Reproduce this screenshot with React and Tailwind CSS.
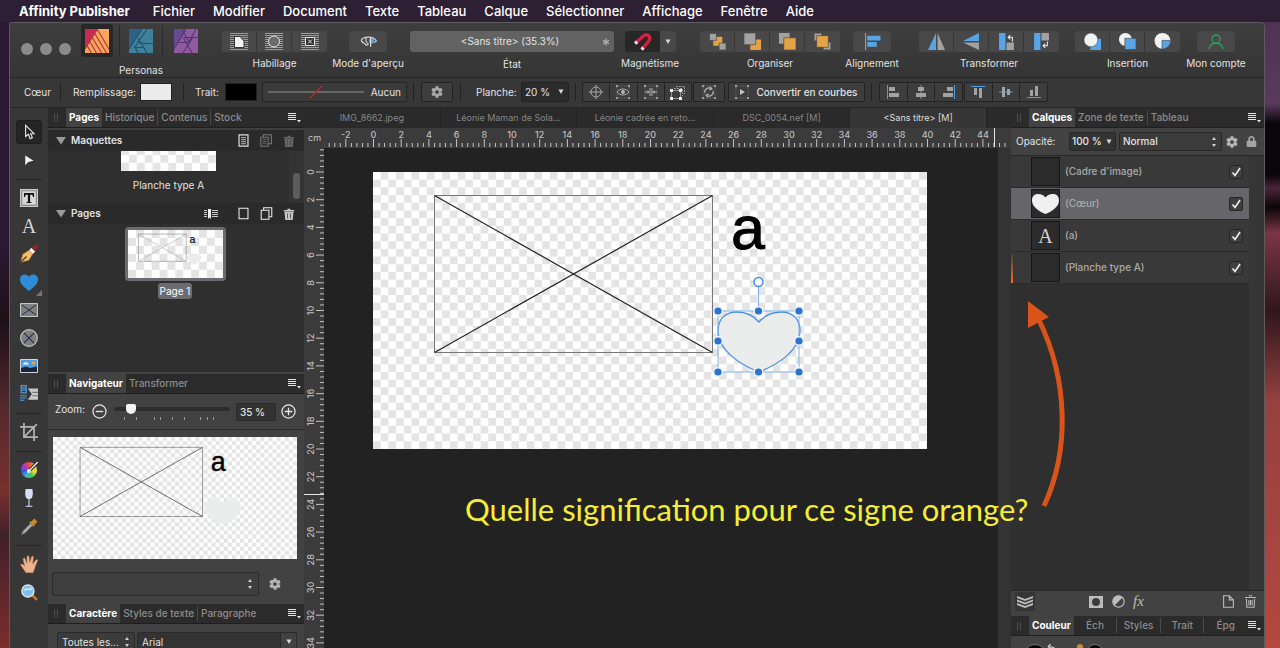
import { useId, useState } from 'react';
import { FaCog, FaLock } from 'react-icons/fa';

const MENUS = ['Fichier', 'Modifier', 'Document', 'Texte', 'Tableau', 'Calque', 'Sélectionner', 'Affichage', 'Fenêtre', 'Aide'];

const DOCUMENTS = ['IMG_8662.jpeg', 'Léonie Maman de Sola...', 'Léonie cadrée en reto...', 'DSC_0054.nef [M]', '<Sans titre> [M]'];

const LAYERS = [
  { id: 'frame', name: "(Cadre d'image)" },
  { id: 'heart', name: '(Cœur)' },
  { id: 'text', name: '(a)' },
  { id: 'master', name: '(Planche type A)', master: true },
];

const HEART = 'M386 150 C380 143 372 140 364 140 C351 140 345 148 345 159 C345 178 366 192 386 200 C406 192 427 178 427 159 C427 148 421 140 408 140 C400 140 392 143 386 150 Z';

// Pixels per centimetre at the current zoom
const CM = 13.85;

// ---------- Page artwork (canvas, navigator and page thumbnails) ----------

const PageArtwork = ({ cell, line = '#222', lineWidth = 1, empty = false, className, children }) => {
  const id = useId();
  return (
    <svg viewBox="0 0 554 277" className={className} preserveAspectRatio="none">
      <defs>
        <pattern id={id} width={cell * 2} height={cell * 2} patternUnits="userSpaceOnUse">
          <rect width={cell * 2} height={cell * 2} fill="#fff" />
          <rect x={cell} width={cell} height={cell} fill="#e4e4e4" />
          <rect y={cell} width={cell} height={cell} fill="#e4e4e4" />
        </pattern>
      </defs>
      <rect width="554" height="277" fill={`url(#${id})`} />
      {!empty && (
        <>
          <path d="M61.5 23.5 H339.5 V180.5 H61.5 Z" fill="none" stroke="#777" strokeWidth={lineWidth} />
          <path d="M61.5 23.5 L339.5 180.5 M61.5 180.5 L339.5 23.5" fill="none" stroke={line} strokeWidth={lineWidth * 1.2} />
          <text x="358" y="77" fontSize="61" fontFamily="Liberation Sans, Arial, sans-serif" fill="#000" stroke="#000">a</text>
          <path d={HEART} fill="#ebecec" />
        </>
      )}
      {children}
    </svg>
  );
};

const Selection = () => (
  <g>
    <path d={HEART} fill="none" stroke="#4a90e2" strokeWidth="1.3" />
    <path d="M345 139 H426 V200 H345 Z M385.5 139 V110" fill="none" stroke="#7fb2ee" strokeWidth="1" />
    <circle cx="385.5" cy="110" r="4.5" fill="#fff" stroke="#4a90e2" strokeWidth="1.6" />
    {[[345, 139], [385.5, 139], [426, 139], [345, 169], [426, 169], [345, 200], [385.5, 200], [426, 200]].map(([x, y]) => (
      <circle key={`${x}-${y}`} cx={x} cy={y} r="4.3" fill="#2a74cf" stroke="#eef3f9" strokeWidth="1.4" />
    ))}
  </g>
);

// ---------- Rulers ----------

const range = (from, to) => Array.from({ length: to - from + 1 }, (_, i) => from + i);

const HorizontalRuler = () => (
  <svg className="h-5 min-w-0 flex-1" aria-hidden="true">
    {range(-9, 114).map((i) => {
      const x = 49.5 + i * 0.4 * CM;
      return <path key={i} d={`M${x} ${i % 5 === 0 ? 11 : 15} V19`} stroke="#c4c4c4" />;
    })}
    {range(-1, 22).map((n) => (
      <text key={n} x={49.5 + n * 2 * CM} y="10" textAnchor="middle" fontSize="9" fontWeight="500" fontFamily="Inter, sans-serif" fill="#bdbdbd">{n * 2}</text>
    ))}
    <path d="M670.5 0 V19" stroke="#e6e6e6" />
  </svg>
);

const VerticalRuler = () => (
  <svg className="h-full w-5 shrink-0 bg-[#3b3b3b]" aria-hidden="true">
    {range(-4, 90).map((i) => {
      const y = 24 + i * 0.4 * CM;
      return <path key={i} d={`M${i % 5 === 0 ? 12 : 16} ${y} H20`} stroke="#c4c4c4" />;
    })}
    {range(0, 17).map((n) => (
      <text key={n} transform={`translate(10 ${24 + n * 2 * CM}) rotate(-90)`} textAnchor="middle" fontSize="9" fontWeight="500" fontFamily="Inter, sans-serif" fill="#bdbdbd">{n * 2}</text>
    ))}
    <path d="M0 346.5 H20" stroke="#e6e6e6" />
  </svg>
);

// ---------- Small shared pieces ----------

const Svg = ({ size = 16, children, className = '' }) => (
  <svg width={size} height={size} viewBox="0 0 16 16" fill="none" className={className} aria-hidden="true">{children}</svg>
);

const UpDown = ({ className = '' }) => (
  <svg viewBox="0 0 6 12" className={`pointer-events-none h-3 w-[6px] ${className}`} fill="#d0d0d0" aria-hidden="true">
    <path d="M3 1 L5 4 H1Z M3 11 L5 8 H1Z" />
  </svg>
);

const Caret = ({ className = '' }) => (
  <svg viewBox="0 0 8 6" className={`pointer-events-none h-[6px] w-2 ${className}`} fill="#d8d8d8" aria-hidden="true">
    <path d="M1.5 0.5 H6.500 L4 5Z" />
  </svg>
);

const PanelMenu = () => (
  <button aria-label="Options du panneau" className="ml-auto mr-[3px]">
    <svg width="14" height="11" viewBox="0 0 14 11" fill="none" stroke="#e4e4e4" aria-hidden="true">
      <path d="M1 1.5 H9 M1 3.5 H9 M1 5.5 H9 M1 7.5 H9" />
      <path d="M10 8 H14 L12 10.5Z" fill="#e4e4e4" stroke="none" />
    </svg>
  </button>
);

const PanelTabs = ({ tabs, spread }) => (
  <div role="tablist" className="flex h-5 shrink-0 items-center border-b border-[#1f1f1f] bg-[#2b2b2b]">
    <div className="ml-[6px] mr-2 h-2 w-[4px] shrink-0 border-x border-[#4e4e4e]" />
    {tabs.map((tab, i) => (
      <button
        key={tab}
        role="tab"
        aria-selected={i === 0}
        className={`whitespace-nowrap ${
          i === 0
            ? 'h-full bg-[#424242] px-[3px] font-bold text-white'
            : `font-medium text-[#8c8c8c] ${spread ? 'flex-1' : 'px-[3px]'} ${i > 1 ? 'border-l border-[#4a4a4a]' : ''}`
        }`}
      >
        {tab}
      </button>
    ))}
    <PanelMenu />
  </div>
);

const ToolGroup = ({ label, className = '', children }) => (
  <div className={`flex shrink-0 flex-col items-center ${className}`}>
    <div className="flex h-[21px] overflow-hidden rounded-[3px] bg-[#484848]">{children}</div>
    <span className="mt-1 whitespace-nowrap leading-[14px]">{label}</span>
  </div>
);

const ToolButton = ({ label, wide, children }) => (
  <button aria-label={label} className={`flex items-center justify-center border-r border-[#383838] last:border-r-0 ${wide ? 'w-[38px]' : 'w-[35px]'}`}>
    {children}
  </button>
);

const BarGroup = ({ className = '', children }) => (
  <div className={`flex h-5 shrink-0 overflow-hidden rounded-[2px] border border-[#232323] bg-[#3d3d3d] ${className}`}>{children}</div>
);

const BarButton = ({ label, children }) => (
  <button aria-label={label} className="flex flex-1 items-center justify-center border-r border-[#232323] last:border-r-0">{children}</button>
);

const BarSeparator = ({ className }) => <div className={`h-[18px] w-px shrink-0 bg-[#222] ${className}`} />;

const Corners = ({ stroke = '#9c9c9c' }) => (
  <g>
    <path d="M3 2 H13 M3 14 H13 M2 3 V13 M14 3 V13" stroke="#6c6c6c" strokeDasharray="1 1" />
    <path d="M1 1h2v2h-2z M13 1h2v2h-2z M1 13h2v2h-2z M13 13h2v2h-2z" fill={stroke} />
  </g>
);

// ---------- Main toolbar ----------

const WrapIcon = ({ children }) => (
  <svg width="18" height="17" viewBox="0 0 18 17" fill="none" aria-hidden="true">
    <path d="M0 .5H18 M0 2.5H18 M0 4.5H18 M0 6.5H18 M0 8.5H18 M0 10.5H18 M0 12.5H18 M0 14.5H18 M0 16.5H18" stroke="#9a9a9a" />
    {children}
  </svg>
);

const Toolbar = () => (
  <header className="flex h-[55px] shrink-0 items-start border-b border-[#262626] bg-gradient-to-b from-[#3e3e3e] to-[#353535]">
    <div className="ml-[11px] mt-5 flex w-[54px] shrink-0 gap-[7px]">
      {['Fermer', 'Réduire', 'Agrandir'].map((name) => (
        <button key={name} aria-label={name} className="size-3 rounded-full bg-[#8b8b8b]" />
      ))}
    </div>
    <div className="ml-[6px] flex w-[120px] shrink-0 flex-col items-center">
      <div className="flex w-full items-center pt-px">
        <button aria-label="Publisher" className="mr-[6px] flex h-[33px] w-8 items-center justify-center rounded-[3px] bg-[#272727]">
          <svg width="24" height="24" viewBox="0 0 24 24" aria-hidden="true">
            <path d="M0 0H24V24H0Z" fill="#fba45c" />
            <path d="M0 0H12L0 20Z" fill="#c92a55" />
            <path d="M12 0 L24 20 M9.5 4 L21.5 24 M7 8 L16.5 24 M4.5 12 L11.5 24 M2 16.500 L6.500 24 M0 20 L12.5 0" stroke="#a3353c" strokeWidth="1.1" />
          </svg>
        </button>
        <button aria-label="Designer" className="flex h-8 w-[43px] items-center justify-center border-l border-[#2a2a2a]">
          <svg width="24" height="24" viewBox="0 0 24 24" fill="none" aria-hidden="true">
            <path d="M0 0H24V24H0Z" fill="#3f809a" />
            <path d="M0 0H13L0 20Z" fill="#2f6188" />
            <path d="M13 0 L0 20 M18 0 L6 18 L9 24 M9.500 13.500 L15 14.500 H24 M9 9 L18 24 M5 18.500 H14" stroke="#24506c" strokeWidth="1.1" />
          </svg>
        </button>
        <button aria-label="Photo" className="flex h-8 flex-1 items-center justify-end border-l border-[#2a2a2a] pr-[3px]">
          <svg width="24" height="24" viewBox="0 0 24 24" fill="none" aria-hidden="true">
            <path d="M0 0H24V24H0Z" fill="#9059a0" />
            <path d="M0 0H12L0 20Z" fill="#684a91" />
            <path d="M12 0 L0 20 M8 0 L15 13 M9.500 8.500 H24 M19 8 L9 24 M15 13.500 H3 M9.500 9 L18 24 M15 13 L22 0" stroke="#573670" strokeWidth="1.1" />
          </svg>
        </button>
      </div>
      <span className="mt-[6px] leading-[14px]">Personas</span>
    </div>

    <ToolGroup label="Habillage" className="ml-[21px] mt-2 w-[105px]">
      <ToolButton label="Habillage serré">
        <WrapIcon><path d="M4.5 3.5H10L14 8V14.5H4.5Z" fill="#f2f2f2" stroke="#333" /></WrapIcon>
      </ToolButton>
      <ToolButton label="Habillage circulaire">
        <WrapIcon><circle cx="9" cy="8.5" r="5.5" fill="#6a6a6a" stroke="#e4e4e4" /></WrapIcon>
      </ToolButton>
      <ToolButton label="Sans habillage">
        <WrapIcon><path d="M4.5 4.5H13.5V12.5H4.5Z" fill="#333" stroke="#e4e4e4" /><path d="M7 6.500 L11 10.500 M11 6.500 L7 10.500" stroke="#e4e4e4" /></WrapIcon>
      </ToolButton>
    </ToolGroup>

    <ToolGroup label="Mode d'aperçu" className="ml-[6px] mt-2 w-[70px]">
      <ToolButton label="Aperçu" wide>
        <Svg size={17}>
          <path d="M1 7 C3 3.500 12 2 15.5 7.500 L13.500 9 M1 7 L6 11.500 L8.500 10 M1 7 L3 9.500" stroke="#d4d4d4" />
          <path d="M6 4.500 C5 7 6 9 7.500 10" stroke="#d4d4d4" />
          <circle cx="11" cy="7.5" r="2.6" fill="#4e9fdc" />
          <path d="M10 4.500V13" stroke="#eee" />
        </Svg>
      </ToolButton>
    </ToolGroup>

    <div className="ml-[7px] mt-2 flex w-[204px] shrink-0 flex-col items-center">
      <div className="flex h-[21px] w-full items-center rounded-[3px] bg-[#626262] px-1">
        <span className="flex-1 pl-1 text-center">&lt;Sans titre&gt; (35.3%)</span>
        <Svg size={8}><path d="M8 1V15 M2 4.500L14 11.500 M14 4.500L2 11.500" stroke="#b4b4b4" strokeWidth="2.400" /></Svg>
      </div>
      <span className="mt-[5px] leading-[14px]">État</span>
    </div>

    <ToolGroup label="Magnétisme" className="ml-[7px] mt-2 w-[58px]">
      <button aria-label="Magnétisme" className="flex w-[35px] items-center justify-center bg-[#272727]">
        <Svg size={19}>
          <path d="M2.5 9 L8.500 3.500 C12 .5 16 4 13 8 L8 14" stroke="#d4213f" strokeWidth="2.8" />
          <path d="M1.8 9.700 L3.500 8.200 M7.300 14.800 L8.700 13.200" stroke="#eee" strokeWidth="2.8" />
        </Svg>
      </button>
      <button aria-label="Options de magnétisme" className="flex w-4 items-center justify-center"><Caret /></button>
    </ToolGroup>

    <ToolGroup label="Organiser" className="ml-[21px] mt-2 w-[140px]">
      <ToolButton label="Arrière-plan"><Svg size={17}><path d="M4 3.500H12.500V12H4Z" fill="#e5a345" /><path d="M.5 .5H7V7H.5Z M9.500 9.500H16V16H9.500Z" fill="#a2a2a2" stroke="#444" strokeWidth=".6" /></Svg></ToolButton>
      <ToolButton label="Reculer"><Svg size={17}><path d="M6 6H16V16H6Z" fill="#e5a345" /><path d="M0 0H11V11H0Z" fill="#a2a2a2" stroke="#444" strokeWidth=".6" /></Svg></ToolButton>
      <ToolButton label="Avancer"><Svg size={17}><path d="M0 0H10V10H0Z" fill="#a2a2a2" /><path d="M4.500 4.500H16V16H4.500Z" fill="#e5a345" stroke="#444" strokeWidth=".6" /></Svg></ToolButton>
      <ToolButton label="Premier plan"><Svg size={17}><path d="M.5 .5H7V7H.5Z M9 9H15.500V15.500H9Z" fill="#a2a2a2" /><path d="M2.500 2.500H13.500V13.500H2.500Z" fill="#e5a345" stroke="#444" strokeWidth=".6" /></Svg></ToolButton>
    </ToolGroup>

    <ToolGroup label="Alignement" className="ml-[6px] mt-2 w-[52px]">
      <ToolButton label="Alignement" wide><Svg size={17}><path d="M1.500 0V16" stroke="#a2a2a2" /><path d="M3 2.500H15.500V7H3Z M3 8.500H12V13H3Z" fill="#57a5e6" /></Svg></ToolButton>
    </ToolGroup>

    <ToolGroup label="Transformer" className="ml-[21px] mt-2 w-[140px]">
      <ToolButton label="Symétrie horizontale"><Svg size={17}><path d="M7.500 0V16H0Z" fill="#57a5e6" /><path d="M9 0V16H16Z" fill="#a2a2a2" /></Svg></ToolButton>
      <ToolButton label="Symétrie verticale"><Svg size={17}><path d="M15 0V7.500H0Z" fill="#57a5e6" /><path d="M0 9H15V16Z" fill="#a2a2a2" /></Svg></ToolButton>
      <ToolButton label="Rotation à gauche"><Svg size={17}><path d="M1 0H7V16H1Z" fill="#57a5e6" /><path d="M8 9H15V16H8Z" fill="#a2a2a2" /><path d="M13.500 8V4H10 M11.500 2L9.500 4L11.500 6" stroke="#eee" /></Svg></ToolButton>
      <ToolButton label="Rotation à droite"><Svg size={17}><path d="M1 0H7V16H1Z" fill="#57a5e6" /><path d="M8 0H15V7H8Z" fill="#a2a2a2" /><path d="M13.500 8V12H10 M11.500 10L9.500 12L11.500 14" stroke="#eee" /></Svg></ToolButton>
    </ToolGroup>

    <ToolGroup label="Insertion" className="ml-4 mt-2 w-[105px]">
      <ToolButton label="Insérer derrière"><Svg size={17}><path d="M6 5.500H16V16H6Z" fill="#57a5e6" /><circle cx="6.500" cy="6.500" r="6.500" fill="#f2f2f2" stroke="#444" strokeWidth=".5" /></Svg></ToolButton>
      <ToolButton label="Insérer devant"><Svg size={17}><circle cx="6" cy="6" r="6" fill="#f2f2f2" /><path d="M5.500 5H16V15.500H5.500Z" fill="#57a5e6" stroke="#444" strokeWidth=".6" /></Svg></ToolButton>
      <ToolButton label="Insérer dedans"><Svg size={17}><circle cx="8" cy="7.500" r="7.500" fill="#f2f2f2" /><path d="M7.500 7H15.500A7.500 7.500 0 0 1 7.500 15Z" fill="#57a5e6" stroke="#444" strokeWidth=".6" /></Svg></ToolButton>
    </ToolGroup>

    <ToolGroup label="Mon compte" className="ml-[6px] mt-2 w-[60px]">
      <ToolButton label="Mon compte" wide><Svg size={16}><circle cx="8" cy="5" r="4" stroke="#27a35f" strokeWidth="1.3" /><path d="M1 15C2 11 5 9 8 9C11 9 14 11 15 15" stroke="#27a35f" strokeWidth="1.3" /></Svg></ToolButton>
    </ToolGroup>
  </header>
);

// ---------- Context bar ----------

const ContextBar = () => (
  <div className="flex h-[30px] shrink-0 items-center whitespace-nowrap border-b border-[#282828] bg-[#373737] pb-px">
    <span className="ml-[14px] w-9">Cœur</span>
    <BarSeparator />
    <span className="ml-3 w-[67px]">Remplissage:</span>
    <button aria-label="Remplissage" className="h-[18px] w-8 shrink-0 border border-[#222] bg-[#ececec]" />
    <BarSeparator className="ml-[11px]" />
    <span className="ml-[11px] w-[30px]">Trait:</span>
    <button aria-label="Trait" className="h-[18px] w-8 shrink-0 border border-[#222] bg-black" />
    <button className="ml-[5px] flex h-5 w-[145px] shrink-0 items-center rounded-[2px] border border-[#262626] bg-[#3b3b3b] px-[5px]">
      <svg viewBox="0 0 96 14" className="h-[14px] w-[96px]" fill="none" aria-hidden="true">
        <path d="M0 7H96" stroke="#777" strokeWidth="1.5" />
        <path d="M42 13L54 1" stroke="#cf2020" strokeWidth="1.3" />
      </svg>
      <span className="ml-auto">Aucun</span>
    </button>
    <BarSeparator className="ml-[6px]" />
    <BarGroup className="ml-[7px] w-8"><BarButton label="Préférences"><FaCog size={12} color="#a8a8a8" /></BarButton></BarGroup>
    <BarSeparator className="ml-[7px]" />
    <label htmlFor="planche" className="ml-[15px] w-[45px]">Planche:</label>
    <div className="relative flex h-5 w-12 shrink-0 items-center rounded-[2px] border border-[#222] bg-[#2b2b2b]">
      <select id="planche" className="w-full appearance-none pl-[3px] outline-none" defaultValue="20 %">
        <option>20 %</option>
      </select>
      <Caret className="absolute right-[3px]" />
    </div>
    <BarSeparator className="ml-[6px]" />
    <BarGroup className="ml-[6px] w-[110px]">
      <BarButton label="Origine de la transformation"><Svg><circle cx="8" cy="8" r="5" stroke="#a8a8a8" /><path d="M8 1V15 M1 8H15" stroke="#a8a8a8" /></Svg></BarButton>
      <BarButton label="Masquer la sélection"><Svg><Corners /><path d="M2 8C5 4 11 4 14 8C11 12 5 12 2 8Z" fill="#3d3d3d" stroke="#b4b4b4" /><circle cx="8" cy="8" r="2" fill="#b4b4b4" /></Svg></BarButton>
      <BarButton label="Afficher les poignées"><Svg><Corners /><path d="M7 4V12 M9 4V12 M2 8H6 M10 8H14" stroke="#b4b4b4" /><path d="M4.500 6L6.500 8L4.500 10Z M11.500 6L9.500 8L11.500 10Z" fill="#b4b4b4" /></Svg></BarButton>
      <BarButton label="Transformer séparément"><Svg><path d="M1.500 6.500H10.500V14.500H1.500Z" stroke="#eee" strokeDasharray="1 1" /><path d="M4 4.500H12.500V12 M6 2.500H14.500V10" stroke="#999" strokeDasharray="2 1" /><path d="M0 5h3v3h-3z M9 5h3v3h-3z M0 13h3v3h-3z M9 13h3v3h-3z" fill="#eee" /></Svg></BarButton>
    </BarGroup>
    <BarGroup className="ml-px w-8">
      <BarButton label="Cycle"><Svg><Corners /><path d="M4 9A4 4 0 0 1 10 4.500 M12 7A4 4 0 0 1 6 11.500 M9 2.500L11 5L8 6 M7 13.500L5 11L8 10" stroke="#b4b4b4" strokeWidth="1.2" /></Svg></BarButton>
    </BarGroup>
    <button className="ml-[3px] flex h-5 w-[137px] shrink-0 items-center rounded-[2px] border border-[#232323] bg-[#3d3d3d] pl-[5px]">
      <Svg><Corners /><path d="M6 5L11 8L6 11Z" fill="#c4c4c4" /></Svg>
      <span className="flex-1 font-medium">Convertir en courbes</span>
    </button>
    <BarSeparator className="ml-[6px]" />
    <BarGroup className="ml-[7px] w-[84px]">
      <BarButton label="Aligner à gauche"><Svg><path d="M2.5 1V15" stroke="#4f9fe0" /><path d="M4 3H10V7H4Z M4 9H14V13H4Z" fill="#a2a2a2" /></Svg></BarButton>
      <BarButton label="Centrer horizontalement"><Svg><path d="M8 1V15" stroke="#4f9fe0" /><path d="M5 3H11V7H5Z M3 9H13V13H3Z" fill="#a2a2a2" /></Svg></BarButton>
      <BarButton label="Aligner à droite"><Svg><path d="M13.5 1V15" stroke="#4f9fe0" /><path d="M6 3H12V7H6Z M2 9H12V13H2Z" fill="#a2a2a2" /></Svg></BarButton>
    </BarGroup>
    <BarGroup className="ml-px w-[84px]">
      <BarButton label="Aligner en haut"><Svg><path d="M1 2.5H15" stroke="#4f9fe0" /><path d="M4 4H7V11H4Z M9 4H12V14H9Z" fill="#a2a2a2" /></Svg></BarButton>
      <BarButton label="Centrer verticalement"><Svg><path d="M1 8H15" stroke="#4f9fe0" /><path d="M4 3H7V13H4Z M9 5H12V11H9Z" fill="#a2a2a2" /></Svg></BarButton>
      <BarButton label="Aligner en bas"><Svg><path d="M1 13.5H15" stroke="#4f9fe0" /><path d="M4 6H7V12H4Z M9 2H12V12H9Z" fill="#a2a2a2" /></Svg></BarButton>
    </BarGroup>
  </div>
);

// ---------- Tools column ----------

const TOOLS = [
  { name: 'Déplacement', icon: <Svg size={18}><path d="M5 2V12L7.500 10L9 14L11 13L9.500 9.500H12.500Z" fill="#222" stroke="#e8e8e8" /></Svg> },
  { name: 'Nœud', icon: <Svg size={12}><path d="M3 2L14 9L7 10.500L3 15Z" fill="#f4f4f4" /></Svg> },
  null,
  { name: 'Cadre de texte', icon: <Svg size={18}><path d="M.5 .5H15.500V15.500H.5Z" fill="#888" stroke="#ccc" /><path d="M2 2H14V14H2Z" fill="#d8d8d8" /><path d="M3.500 3.500H12.500V7H11.500L11 5H9V11.500L10.500 12V12.500H5.500V12L7 11.500V5H5L4.500 7H3.500Z" fill="#111" /></Svg> },
  { name: 'Texte artistique', icon: <span className="font-['Liberation_Serif',serif] text-xl leading-none text-[#d4d4d4]">A</span> },
  { name: 'Plume', icon: <Svg size={20}><path d="M1 15L3 8L8 5L11 8L8 13Z" fill="#f0bd72" stroke="#8a5a20" strokeWidth=".5" /><path d="M1 15L6 10" stroke="#4d3210" /><path d="M8 5L10 3L13 6L11 8Z" fill="#eee" /><path d="M10 3L14 .5L15.500 2L13 6Z" fill="#8f2922" /></Svg> },
  { name: 'Cœur', flyout: true, icon: <Svg size={18}><path d="M8 16C4 12.500 0 10 0 5.500C0 1 6 0 8 3.500C10 0 16 1 16 5.500C16 10 12 12.500 8 16Z" fill="#2f8cd8" /></Svg> },
  { name: "Cadre d'image rectangle", icon: <svg width="18" height="14" viewBox="0 0 18 14" aria-hidden="true"><path d="M.5 .5H17.5V13.5H.5Z" fill="#808080" stroke="#c4c4c4" /><path d="M2 2L16 12M16 2L2 12" stroke="#252a4a" /></svg> },
  { name: "Cadre d'image ellipse", icon: <Svg size={18}><circle cx="8" cy="8" r="7.4" fill="#808080" stroke="#c4c4c4" /><path d="M3.500 3.500L12.500 12.500M12.500 3.500L3.500 12.500" stroke="#252a4a" /></Svg> },
  { name: 'Placer une image', icon: <svg width="18" height="14" viewBox="0 0 18 14" aria-hidden="true"><path d="M.5 .5H17.5V13.5H.5Z" fill="#4f9ee6" stroke="#d4d4d4" /><path d="M1 9L6 7.500L10 9L17 7.500V13H1Z" fill="#15263c" /><path d="M3 5.500C4 2.500 7 2.500 9 5.500Z" fill="#fff" /><circle cx="13.500" cy="4" r="1.800" fill="#f0a52c" /></svg> },
  { name: 'Fusion de données', icon: <Svg size={18}><path d="M1 .5H5.500V7H1Z" stroke="#4f9fe0" /><path d="M1 2.500H5.500M1 4.500H5.500M0 9.500H6M0 11.500H6M0 13.500H4" stroke="#4f9fe0" /><path d="M7 3H16V13H7L10.500 8Z" fill="#c8c8c8" /><path d="M11 6.500H16M11 9.500H16" stroke="#777" /></Svg> },
  null,
  { name: 'Recadrage', icon: <Svg size={18}><path d="M3.500 0V12.500H16M0 3.500H12.500V16M3.500 12.500L15 1" stroke="#b4b4b4" strokeWidth="1.5" /></Svg> },
  null,
  { name: 'Dégradé', icon: <span className="relative size-4 rounded-full bg-[conic-gradient(#e8483a,#f0b02c,#e9e23a,#4dc44a,#3cb8d8,#3455d8,#b23ad0,#e8483a)]"><Svg size={18} className="absolute"><path d="M7 8L15 0" stroke="#222" strokeWidth="3" /><path d="M7 8L15 0" stroke="#eee" strokeWidth="1.3" /><circle cx="7" cy="8" r="1.8" fill="#eee" /></Svg></span> },
  { name: 'Transparence', icon: <Svg size={18}><path d="M5 0H11C12 6 11 9 8 9C5 9 4 6 5 0Z" fill="#d4def2" /><path d="M8 9V15M5 15.500H11" stroke="#b4c0d8" strokeWidth="1.2" /></Svg> },
  { name: 'Pipette', icon: <Svg size={17}><path d="M0 16L2 12L9 5L11 7L4 14Z" fill="#a8adb2" stroke="#555" strokeWidth=".5" /><path d="M7.500 4L12 8.500L13 6L15.500 3.500L12.500 .5L10 3Z" fill="#c98a2c" /></Svg> },
  null,
  { name: 'Main', icon: <Svg size={19}><path d="M5 15C3 12 1 9.500 .5 8C1.500 7 3 8 4 9.500L2.500 3.500C3 2 4.200 2.500 4.500 3.500L5.800 7L5.800 1.500C6.200 .3 7.500 .3 7.700 1.500L8.200 6.500L9.700 1.500C10.300 .5 11.500 .9 11.300 2.200L10.700 7.500L13.500 4C14.500 3.300 15.400 4.200 14.700 5.300C13 8.500 12.500 12 11 15Z" fill="#edb48c" stroke="#a66a48" strokeWidth=".4" /></Svg> },
  { name: 'Zoom', icon: <Svg size={17}><path d="M10 10L15 15" stroke="#c27a3a" strokeWidth="2.4" /><circle cx="6.500" cy="6.500" r="5.700" fill="#7cc0f0" stroke="#e4e4e4" strokeWidth="1.3" /><path d="M3 6C5 3 8 7 10 4" stroke="#d8efff" strokeWidth="1.5" /></Svg> },
];

const Tools = () => (
  <nav aria-label="Outils" className="flex w-[38px] shrink-0 flex-col items-center bg-[#373737] pt-[10px]">
    {TOOLS.map((tool, i) =>
      tool ? (
        <button key={tool.name} aria-label={tool.name} className="relative flex h-7 w-full shrink-0 items-center justify-center">
          <span className={`flex h-6 w-[26px] items-center justify-center rounded-[3px] ${i === 0 ? 'border border-[#1e1e1e] bg-[#252525]' : ''}`}>{tool.icon}</span>
          {tool.flyout && <span className="absolute bottom-0 right-[6px] border-b-[6px] border-l-[6px] border-b-[#777] border-l-transparent" />}
        </button>
      ) : (
        <div key={i} className="flex h-[10px] w-full shrink-0 items-center px-[6px]"><div className="h-px w-full bg-[#242424]" /></div>
      )
    )}
  </nav>
);

// ---------- Left studio ----------

const SectionHeader = ({ title, children }) => (
  <div className="flex h-[21px] shrink-0 items-center bg-[#2a2a2a] pl-2 pr-[9px]">
    <svg width="10" height="8" viewBox="0 0 10 8" fill="#9a9a9a" aria-hidden="true"><path d="M0 0H10L5 7.5Z" /></svg>
    <span className="ml-[5px] font-semibold">{title}</span>
    <div className="ml-auto flex items-center">{children}</div>
  </div>
);

const TrashIcon = ({ color }) => (
  <Svg size={12}><path d="M2 5H14L13 16H3Z" fill={color} /><path d="M1 3.5H15M6 2H10" stroke={color} strokeWidth="2" /><path d="M6 7V14M10 7V14" stroke="#444" /></Svg>
);

const PagesPanel = () => (
  <section className="flex h-[264px] shrink-0 flex-col bg-[#2f2f2f]">
    <PanelTabs tabs={['Pages', 'Historique', 'Contenus', 'Stock']} />
    <div className="h-[2px] shrink-0 bg-[#3f3f3f]" />
    <SectionHeader title="Maquettes">
      <button aria-label="Ajouter une maquette"><Svg size={13}><path d="M2.5 1H13.5V15H2.5Z" stroke="#ddd" strokeWidth="1.5" /><path d="M5 4.5H11M5 7H11M5 9.5H11M5 12H11" stroke="#ddd" /></Svg></button>
      <button aria-label="Dupliquer la maquette" className="ml-[10px]"><Svg size={13}><path d="M1 4H10V15H1Z M4 4V1H14V12H10" stroke="#777" strokeWidth="1.3" /><path d="M3 7H8M3 9.5H8M3 12H8" stroke="#777" /></Svg></button>
      <button aria-label="Supprimer la maquette" className="ml-[10px]"><TrashIcon color="#666" /></button>
    </SectionHeader>
    <div className="flex h-[52px] shrink-0">
      <div className="flex min-w-0 flex-1 flex-col items-center">
        <div className="flex h-5 items-end overflow-hidden">
          <PageArtwork cell={46} empty className="h-12 w-[95px] shrink-0" />
        </div>
        <span className="mt-[7px] leading-[14px]">Planche type A</span>
      </div>
      <div className="w-[15px] bg-[#333] pt-[22px]"><div className="mx-auto h-[26px] w-[7px] rounded-full bg-[#5c5c5c]" /></div>
    </div>
    <SectionHeader title="Pages">
      <button aria-label="Marque de section"><svg width="14" height="10" viewBox="0 0 14 10" fill="none" stroke="#ccc" aria-hidden="true"><path d="M0 1.5H3M0 3.5H3M0 5.5H3M0 7.5H3M8 1.5H14M8 3.5H14M8 5.5H14M8 7.5H14" /><path d="M4 0H7V10L5.500 8.500L4 10Z" fill="#eee" stroke="none" /></svg></button>
      <button aria-label="Ajouter une page" className="ml-[19px]"><Svg size={13}><path d="M2.5 1.5H13.5V14.5H2.5Z" stroke="#eee" strokeWidth="1.3" /></Svg></button>
      <button aria-label="Dupliquer la page" className="ml-[10px]"><Svg size={13}><path d="M1.5 4H11V15H1.5Z M4.5 4V1H14.5V12H11" stroke="#eee" strokeWidth="1.3" /></Svg></button>
      <button aria-label="Supprimer la page" className="ml-[10px]"><TrashIcon color="#c4c4c4" /></button>
    </SectionHeader>
    <div className="flex flex-col items-center pr-[2px] pt-[3px]">
      <button aria-label="Page 1" className="rounded-[4px] border-[3px] border-[#6c6b70] bg-[#6c6b70]">
        <PageArtwork cell={46} line="#aaa" lineWidth={3} className="h-12 w-[95px]" />
      </button>
      <span className="mt-[2px] rounded-[3px] bg-[#6c6b70] px-[2px] leading-4 text-white">Page 1</span>
    </div>
  </section>
);

const NavigatorPanel = () => {
  const [zoom, setZoom] = useState(11);
  return (
    <section className="flex h-[232px] shrink-0 flex-col bg-[#424242] pt-[2px]">
      <PanelTabs tabs={['Navigateur', 'Transformer']} />
      <div className="flex h-9 shrink-0 items-center border-b border-[#2c2c2c] pl-[7px] pr-2">
        <label htmlFor="zoom" className="w-[37px] pb-1">Zoom:</label>
        <button aria-label="Zoom arrière"><Svg size={15}><circle cx="8" cy="8" r="7" stroke="#e8e8e8" strokeWidth="1.3" /><path d="M4 8H12" stroke="#e8e8e8" strokeWidth="1.4" /></Svg></button>
        <div className="relative ml-[7px] h-4 w-[116px]">
          <input
            id="zoom"
            type="range"
            value={zoom}
            onChange={(e) => setZoom(Number(e.target.value))}
            className="absolute top-0 h-[10px] w-full appearance-none bg-transparent [&::-webkit-slider-runnable-track]:h-1 [&::-webkit-slider-runnable-track]:rounded-full [&::-webkit-slider-runnable-track]:bg-[#2d2d2d] [&::-webkit-slider-thumb]:-mt-[3px] [&::-webkit-slider-thumb]:h-[10px] [&::-webkit-slider-thumb]:w-[10px] [&::-webkit-slider-thumb]:appearance-none [&::-webkit-slider-thumb]:rounded-t-[2px] [&::-webkit-slider-thumb]:rounded-b-[5px] [&::-webkit-slider-thumb]:bg-[#f4f4f4]"
          />
          <svg viewBox="0 0 116 3" className="absolute bottom-0 h-[3px] w-full" stroke="#999" aria-hidden="true">
            <path d="M10.5 0V3M22.5 0V3M40.5 0V3M46.5 0V3M58.5 0V3M70.5 0V3M86.5 0V3M93.5 0V3M99.5 0V3" />
          </svg>
        </div>
        <input aria-label="Pourcentage de zoom" defaultValue="35 %" className="ml-[6px] h-[18px] w-10 rounded-[2px] border border-[#2b2b2b] bg-[#333] pl-[3px] font-medium outline-none" />
        <button aria-label="Zoom avant" className="ml-[5px]"><Svg size={15}><circle cx="8" cy="8" r="7" stroke="#e8e8e8" strokeWidth="1.3" /><path d="M4 8H12M8 4V12" stroke="#e8e8e8" strokeWidth="1.4" /></Svg></button>
      </div>
      <div className="pl-[5px] pr-[7px] pt-[7px]">
        <PageArtwork cell={9.23} line="#555" lineWidth={1.6} className="h-[122px] w-full" />
      </div>
      <div className="mt-[13px] flex items-center px-1">
        <div className="relative flex h-6 w-[207px] items-center rounded-[2px] border border-[#2b2b2b] bg-[#3f3f3f]">
          <select aria-label="Vue enregistrée" className="h-full w-full appearance-none outline-none"><option></option></select>
          <UpDown className="absolute right-[5px]" />
        </div>
        <button aria-label="Gérer les vues" className="ml-[10px]"><FaCog size={12} color="#b4b4b4" /></button>
      </div>
    </section>
  );
};

const CharacterPanel = () => (
  <section className="flex min-h-0 flex-1 flex-col overflow-hidden bg-[#424242]">
    <PanelTabs tabs={['Caractère', 'Styles de texte', 'Paragraphe']} />
    <div className="flex shrink-0 gap-[2px] pl-[9px] pr-[7px] pt-2">
      <div className="relative flex h-5 w-[78px] items-center rounded-[2px] border border-[#2a2a2a] bg-[#3b3b3b]">
        <select aria-label="Collection de polices" className="h-full w-full appearance-none pl-1 outline-none"><option>Toutes les...</option></select>
        <UpDown className="absolute right-[4px]" />
      </div>
      <div className="relative flex h-5 flex-1 items-center rounded-[2px] border border-[#2a2a2a] bg-[#333]">
        <select aria-label="Police" className="h-full w-full appearance-none pl-1 outline-none"><option>Arial</option></select>
        <span className="absolute right-0 flex h-full w-4 items-center justify-center border-l border-[#2a2a2a] bg-[#424242]"><Caret /></span>
      </div>
    </div>
  </section>
);

// ---------- Document view ----------

const DocumentView = () => (
  <main className="flex min-w-0 flex-1 flex-col bg-[#222]">
    <div role="tablist" className="flex h-5 shrink-0 bg-[#2a2a2a] pr-6 text-[9px]">
      {DOCUMENTS.map((name, i) => (
        <button
          key={name}
          role="tab"
          aria-selected={i === 4}
          className={`min-w-0 flex-1 truncate border-r border-[#232323] ${i === 4 ? 'bg-[#363636] text-[#dedede]' : 'text-[#868686]'}`}
        >
          {name}
        </button>
      ))}
    </div>
    <div className="flex h-5 shrink-0 bg-[#3b3b3b]">
      <span className="w-5 shrink-0 pl-1 pt-[3px] text-[9px] text-[#c8c8c8]">cm</span>
      <HorizontalRuler />
    </div>
    <div className="flex min-h-0 flex-1">
      <VerticalRuler />
      <div className="relative min-w-0 flex-1 overflow-hidden">
        <PageArtwork cell={7.69} className="absolute left-[49px] top-6 h-[277px] w-[554px] overflow-visible">
          <Selection />
        </PageArtwork>
      </div>
      <div className="w-[13px] shrink-0 bg-[#333]" />
    </div>
  </main>
);

// ---------- Right studio ----------

const LayerThumb = ({ id }) => (
  <span className="flex size-[29px] shrink-0 items-center justify-center border border-[#161616] bg-[#2b2b2b]">
    {id === 'heart' && <svg viewBox="345 140 82 60" className="h-5 w-[27px]" aria-hidden="true"><path d={HEART} fill="#f0f0f0" /></svg>}
    {id === 'text' && <span className="font-['Liberation_Serif',serif] text-xl leading-none text-[#d4d4d4]">A</span>}
  </span>
);

const LayersPanel = () => {
  const [selected, setSelected] = useState('heart');
  const [visible, setVisible] = useState(LAYERS.map((layer) => layer.id));

  const toggle = (id) => setVisible(visible.includes(id) ? visible.filter((v) => v !== id) : [...visible, id]);

  return (
    <section className="flex min-h-0 flex-1 flex-col">
      <PanelTabs tabs={['Calques', 'Zone de texte', 'Tableau']} />
      <div className="flex h-7 shrink-0 items-center border-b border-[#282828] bg-[#424242] pl-[5px]">
        <label htmlFor="opacity" className="w-[53px]">Opacité:</label>
        <div className="relative flex h-[19px] w-[47px] shrink-0 items-center rounded-[2px] border border-[#282828] bg-[#333]">
          <select id="opacity" className="w-full appearance-none pl-[2px] font-medium outline-none"><option>100 %</option></select>
          <Caret className="absolute right-[2px]" />
        </div>
        <div className="relative ml-[3px] flex h-[19px] w-[103px] shrink-0 items-center rounded-[2px] border border-[#282828] bg-[#3b3b3b]">
          <select aria-label="Mode de fusion" className="w-full appearance-none pl-[3px] font-medium outline-none"><option>Normal</option></select>
          <UpDown className="absolute right-[4px]" />
        </div>
        <button aria-label="Options de fusion" className="ml-1"><FaCog size={12} color="#b4b4b4" /></button>
        <button aria-label="Verrouiller" className="ml-2"><FaLock size={11} color="#a4a4a4" /></button>
      </div>
      <div className="flex min-h-0 flex-1 bg-[#2f2f2f]">
        <ul className="min-w-0 flex-1">
          {LAYERS.map((layer) => (
            <li
              key={layer.id}
              onClick={() => setSelected(layer.id)}
              className={`relative flex h-8 items-center border-b border-[#2b2b2b] pl-5 pr-[6px] ${selected === layer.id ? 'bg-[#66656a]' : 'bg-[#393939]'}`}
            >
              {layer.master && <span className="absolute inset-y-0 left-0 w-[2px] bg-gradient-to-b from-[#393939] to-[#ff6a1f]" />}
              <LayerThumb id={layer.id} />
              <label htmlFor={`layer-${layer.id}`} className="ml-[5px] flex-1 font-medium text-[#a9a9a9]">{layer.name}</label>
              <span className="relative flex size-[14px]">
                <input
                  id={`layer-${layer.id}`}
                  type="checkbox"
                  checked={visible.includes(layer.id)}
                  onChange={() => toggle(layer.id)}
                  className="peer size-full appearance-none rounded-[2px] border border-[#262626] bg-[#3f3f3f]"
                />
                <svg viewBox="0 0 14 14" className="pointer-events-none absolute inset-0 hidden peer-checked:block" fill="none" aria-hidden="true">
                  <path d="M3.5 7.5L6 10.500L11 3" stroke="#f0f0f0" strokeWidth="1.6" />
                </svg>
              </span>
            </li>
          ))}
        </ul>
        <div className="w-[15px] shrink-0 bg-[#363636]" />
      </div>
      <div className="flex h-[22px] shrink-0 items-center border-t border-[#282828] bg-[#424242] pl-1 pr-[7px]">
        <button aria-label="Calques" className="flex h-[19px] w-5 items-center justify-center bg-[#363636]">
          <svg width="16" height="12" viewBox="0 0 16 12" aria-hidden="true"><path d="M0 0L8 3L16 0V2L8 5L0 2Z M0 3.500L8 6.500L16 3.500V5.500L8 8.500L0 5.500Z M0 7L8 10L16 7V9L8 12L0 9Z" fill="#bdbdbd" /></svg>
        </button>
        <button aria-label="Masque" className="ml-[54px]"><svg width="14" height="12" viewBox="0 0 14 12" aria-hidden="true"><path d="M0 0H14V12H0Z" fill="#bdbdbd" /><circle cx="7" cy="6" r="4" fill="#3c3c3c" /></svg></button>
        <button aria-label="Réglages" className="ml-[9px]"><Svg size={13}><circle cx="8" cy="8" r="7" stroke="#bdbdbd" strokeWidth="1.4" /><path d="M13 3A7 7 0 0 0 3 13Z" fill="#bdbdbd" /></Svg></button>
        <button aria-label="Effets" className="ml-2 font-['Liberation_Serif',serif] text-[15px] italic leading-none text-[#bdbdbd]">fx</button>
        <button aria-label="Nouveau calque" className="ml-auto"><Svg size={13}><path d="M2 1H9L14 6V15H2Z M9 1V6H14" stroke="#bdbdbd" strokeWidth="1.3" /></Svg></button>
        <button aria-label="Supprimer le calque" className="ml-[9px]"><Svg size={13}><path d="M1 3H15M6 1H10M3 5L3.500 15H12.500L13 5M6 6V13M8 6V13M10 6V13" stroke="#bdbdbd" strokeWidth="1.3" /></Svg></button>
      </div>
    </section>
  );
};

const ColorPanel = () => (
  <section className="shrink-0 bg-[#424242] pt-1">
    <PanelTabs tabs={['Couleur', 'Éch', 'Styles', 'Trait', 'Épg']} spread />
    <div className="h-3 overflow-hidden pl-3 pt-2">
      <div className="flex items-start">
        <button aria-label="Couleur de trait" className="size-6 rounded-full border border-[#777] bg-black" />
        <button aria-label="Permuter"><Svg size={10}><path d="M14 12C14 7 9 4 2 4M6 0L2 4L6 8" stroke="#ccc" strokeWidth="2" /></Svg></button>
        <span className="ml-5 h-5 w-[6px] rounded-full bg-[#c98a2c]" />
        <button aria-label="Couleur prélevée" className="ml-1 size-4 rounded-full border border-[#777] bg-black" />
      </div>
    </div>
  </section>
);

export default function App() {
  return (
    <div className="relative flex h-screen flex-col overflow-hidden bg-[linear-gradient(to_bottom,#4d3152_0%,#593a5c_16%,#0b0609_19%,#0b0609_27%,#4a2438_29%,#0b0609_32%,#7b3644_36%,#30161d_48%,#96413f_62%,#b4483f_100%)] font-[Inter,'Liberation_Sans',sans-serif] text-[10px] text-[#e2e2e2]">
      <nav aria-label="Menu principal" className="flex h-[22px] shrink-0 items-center gap-[18px] bg-[#2d2034] pl-[19px] pt-px text-[13px] font-medium text-white">
        <button className="pr-[5px] font-bold">Affinity Publisher</button>
        {MENUS.map((menu) => <button key={menu}>{menu}</button>)}
      </nav>
      <div className="flex min-h-0 flex-1">
        <div className="w-[9px] shrink-0 bg-[linear-gradient(to_bottom,#2b1833_0%,#2d1834_35%,#1f1018_48%,#552a2e_62%,#77302e_75%,#40202a_82%,#7c2d2d_100%)]" />
        <div className="mr-[15px] flex min-w-0 flex-1 flex-col overflow-hidden rounded-t-[5px] border-x border-t border-[#5c5c5c] bg-[#373737]">
          <Toolbar />
          <ContextBar />
          <div className="flex min-h-0 flex-1">
            <Tools />
            <aside className="flex w-[256px] shrink-0 flex-col">
              <PagesPanel />
              <NavigatorPanel />
              <CharacterPanel />
            </aside>
            <DocumentView />
            <aside className="flex w-[253px] shrink-0 flex-col">
              <LayersPanel />
              <ColorPanel />
            </aside>
          </div>
        </div>
      </div>

      {/* Note laid over the window */}
      <p className="absolute left-[465px] top-[486px] whitespace-nowrap font-['Lato',sans-serif] text-[31px] leading-[46px] text-[#f6ee35]">
        Quelle signification pour ce signe orange?
      </p>
      <svg className="pointer-events-none absolute left-[1020px] top-[295px] h-[220px] w-[60px]" viewBox="1020 295 60 220" fill="none" aria-hidden="true">
        <path d="M1044 506C1070 450 1068 380 1039 320" stroke="#d9541a" strokeWidth="5" />
        <path d="M1028 301L1049 317L1028 328Z" fill="#d9541a" />
      </svg>
    </div>
  );
}
